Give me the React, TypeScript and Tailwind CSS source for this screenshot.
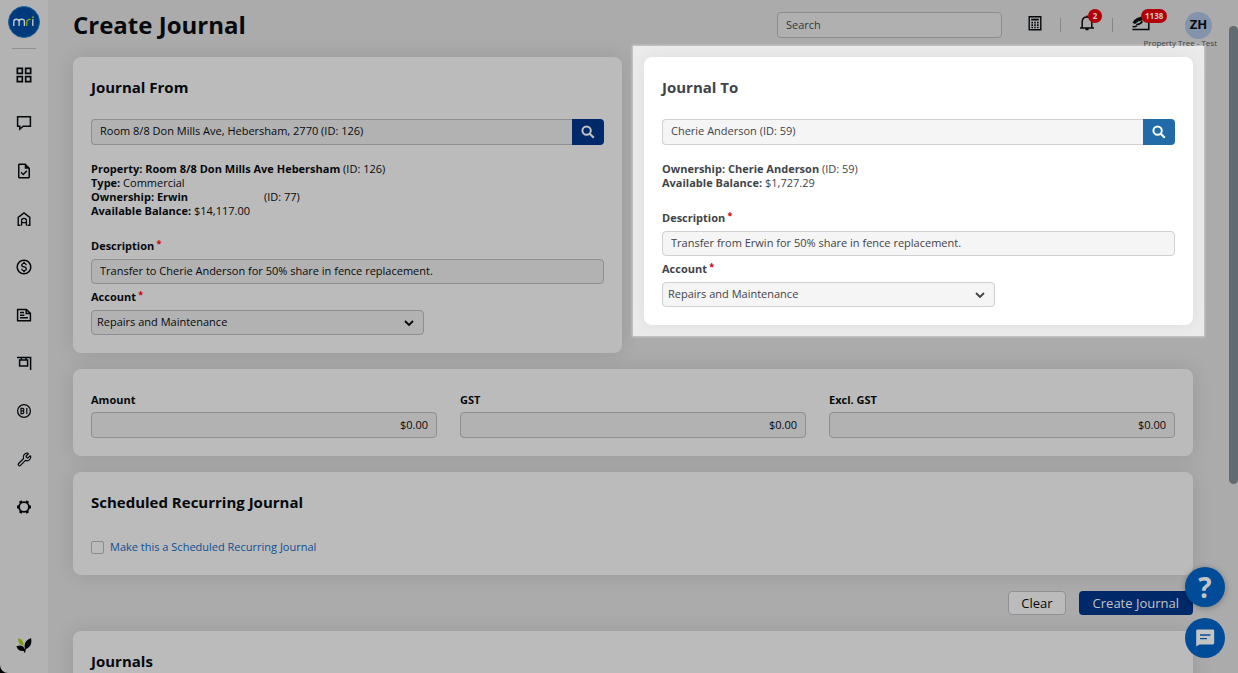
import { Wrench } from "lucide-react";
import type { ReactNode } from "react";
import {
  MdOutlineGridView,
  MdOutlineMonetizationOn,
  MdOutlineTask,
} from "react-icons/md";

const navItems: { label: string; icon: ReactNode }[] = [
  { label: "Dashboard", icon: <MdOutlineGridView size={20} /> },
  {
    label: "Messages",
    icon: (
      <svg className="size-4" viewBox="0 0 16 16" fill="none" stroke="currentColor" strokeWidth="1.5">
        <path d="M1.6 1.8h12.8v9.4H7.2L3.8 14.2v-3H1.6z" />
      </svg>
    ),
  },
  { label: "Tasks", icon: <MdOutlineTask size={18} /> },
  {
    label: "Properties",
    icon: (
      <svg className="size-4" viewBox="0 0 16 16" fill="none" stroke="currentColor" strokeWidth="1.4">
        <path d="M4.400 14.200H2.200V6.400L8 2l5.800 4.400v7.800h-2.200" />
        <path strokeWidth="1.300" d="M5.600 14.800V9.600Q5.600 7.400 8 7.400t2.400 2.200v5.200M5.800 11.600h4.400" />
      </svg>
    ),
  },
  { label: "Accounting", icon: <MdOutlineMonetizationOn size={18} /> },
  {
    label: "Invoices",
    icon: (
      <svg className="size-4" viewBox="0 0 16 16" fill="none" stroke="currentColor" strokeWidth="1.5">
        <path d="M1.6 2.4h8.8l4 4v7.4H1.6zM10.2 2.6v3.8h4M4 5.6h4M4 8.2h4.4M4 10.8h8" />
      </svg>
    ),
  },
  {
    label: "Listings",
    icon: (
      <svg className="size-4" viewBox="0 0 16 16" fill="none" stroke="currentColor" strokeWidth="1.5">
        <path d="M1 2.4h13.6V15M3.6 5h8v6h-8zM5.4 2.4V5M10 2.4V5" />
      </svg>
    ),
  },
  {
    label: "Insights",
    icon: (
      <svg className="size-4" viewBox="0 0 16 16" fill="none" stroke="currentColor">
        <circle cx="8" cy="8" r="6.4" strokeWidth="1.3" />
        <path strokeWidth="1.2" d="M5 5.4v5.2h1.8a1.4 1.4 0 0 0 0-2.7H5h1.6a1.2 1.2 0 0 0 0-2.5zM10.8 5v6" />
      </svg>
    ),
  },
  { label: "Maintenance", icon: <Wrench size={15} /> },
  {
    label: "Settings",
    icon: (
      <svg className="size-4" viewBox="0 0 16 16" fill="none" stroke="currentColor">
        <circle cx="8" cy="8" r="4.9" strokeWidth="1.800" />
        <path
          strokeWidth="3"
          d="M12.800 8H15M1 8h2.200M10.600 4l1.200-2M4.200 14l1.200-2M5.400 4L4.200 2M11.800 14l-1.200-2"
        />
      </svg>
    ),
  },
];

const amounts = [
  { id: "amount", label: "Amount" },
  { id: "gst", label: "GST" },
  { id: "excl-gst", label: "Excl. GST" },
];

type JournalProps = {
  id: string;
  title: string;
  party: string;
  description: string;
  highlighted?: boolean;
  children: ReactNode;
};

function SearchIcon() {
  return (
    <svg className="size-3.5" viewBox="0 0 14 14" fill="none" stroke="currentColor" strokeWidth="2">
      <circle cx="5.6" cy="5.6" r="4.2" />
      <path d="M8.8 8.8l4 4" />
    </svg>
  );
}

function Label({ htmlFor, children }: { htmlFor: string; children: ReactNode }) {
  return (
    <label htmlFor={htmlFor} className="block text-[11px] leading-4 font-bold">
      {children}
    </label>
  );
}

function Required() {
  return <span className="align-top text-[9px] leading-3 text-[#c8000b]"> *</span>;
}

function JournalCard({ id, title, party, description, highlighted, children }: JournalProps) {
  const field = highlighted
    ? "border-[#cfcfd6] bg-[#f5f5f5]"
    : "border-[#8e8e93] bg-[#b2b2b2]";

  return (
    <section
      className={
        highlighted
          ? "relative rounded-lg bg-white px-[18px] pt-[18px] pb-[18px] text-[#3f4449] shadow-[0_0_16px_rgba(0,0,0,0.06)]"
          : "rounded-lg bg-[#bbbbbb] px-[18px] pt-[18px] pb-[18px] shadow-[0_0_20px_rgba(0,0,0,0.1)]"
      }
    >
      <h2 className="text-[15px] leading-6 font-bold">{title}</h2>
      <div className="mt-5 flex h-[26px]">
        <input
          aria-label={title}
          defaultValue={party}
          className={`min-w-0 flex-1 rounded-l-sm border border-r-0 px-2 pb-0.5 text-[11px] ${field}`}
        />
        <button
          aria-label="Search"
          className={`flex w-8 items-center justify-center rounded-r-sm ${
            highlighted ? "bg-[#226ba9] text-white" : "bg-[#00296a] text-[#c4c4c4]"
          }`}
        >
          <SearchIcon />
        </button>
      </div>
      <div className="mt-[17px] text-[11px] leading-[14px]">{children}</div>
      <div className="mt-5">
        <Label htmlFor={`${id}-description`}>
          Description
          <Required />
        </Label>
        <input
          id={`${id}-description`}
          defaultValue={description}
          className={`mt-[5px] block h-[25px] w-full rounded-sm border px-2 pb-0.5 text-[11px] ${field}`}
        />
      </div>
      <div className="mt-[5px] w-[65%]">
        <Label htmlFor={`${id}-account`}>
          Account
          <Required />
        </Label>
        <div className="relative mt-[5px]">
          <select
            id={`${id}-account`}
            className={`block h-[25px] w-full appearance-none rounded-sm border px-[5px] text-[11px] ${field}`}
          >
            <option>Repairs and Maintenance</option>
          </select>
          <svg
            className="pointer-events-none absolute top-2 right-2.5 size-2.5"
            viewBox="0 0 10 10"
            fill="none"
            stroke="currentColor"
            strokeWidth="1.8"
          >
            <path d="M1 3l4 4 4-4" />
          </svg>
        </div>
      </div>
    </section>
  );
}

function Sidebar() {
  return (
    <aside className="flex w-12 shrink-0 flex-col items-center rounded-bl-lg bg-[#b3b3b3]">
      <svg className="mt-1.5 size-8 shrink-0" viewBox="0 0 32 32" fill="none" role="img" aria-label="MRI">
        <circle cx="16" cy="16" r="15.5" fill="#003a7c" stroke="#1c6496" />
        <g strokeWidth="1.4" strokeLinecap="round">
          <path stroke="#c0c8d0" d="M5.800 19.400v-3.600q0-2.600 2.600-2.600t2.700 2.600v3.600M11.100 15.800q0-2.600 2.700-2.600t2.600 2.600v3.600" />
          <path stroke="#7ea81c" d="M18.800 19.400v-3.200q0-2.800 3.400-2.800" />
          <path stroke="#c0c8d0" d="M24.800 13.600v5.800" />
          <path stroke="#7ea81c" strokeWidth="2" d="M25 11.200v.1" />
        </g>
      </svg>
      <div className="mt-2.5 h-px w-6 shrink-0 bg-[#8e9296]" />
      <nav className="mt-0.5">
        {navItems.map((item) => (
          <a
            key={item.label}
            href="#"
            aria-label={item.label}
            className="flex size-12 items-center justify-center"
          >
            {item.icon}
          </a>
        ))}
      </nav>
      <svg className="mt-auto mb-5 size-4 shrink-0" viewBox="0 0 16 16">
        <path fill="#7a9c14" d="M2 1.2Q7.6 2 7.6 8.8 2.200 8 2 1.2z" />
        <path
          fill="#06090c"
          d="M15 1Q17 9.600 9.200 12.400 6.400 4.600 15 1zM.4 9.200Q7 7.200 8.600 12q.6-1 1.400-1L9.200 15.600H7.800l.2-1.600Q2 14.800.4 9.200z"
        />
      </svg>
    </aside>
  );
}

function Header() {
  return (
    <header className="relative z-10 flex h-[57px] shrink-0 items-start justify-between pt-3 pr-[26px] pl-[25px]">
      <h1 className="text-2xl leading-[26px] font-bold">Create Journal</h1>
      <div className="flex h-[26px] items-center">
        <input
          aria-label="Search"
          placeholder="Search"
          className="h-[26px] w-[225px] rounded-sm border border-[#8a8c90] bg-[#b0b0b0] px-2 pb-0.5 text-[11px] placeholder:text-[#33373b]"
        />
        <button aria-label="Calculator" className="ml-[25px] pb-1">
          <svg className="size-4" viewBox="0 0 16 16" fill="none" stroke="currentColor">
            <path strokeWidth="1.4" d="M2.200 1.700h11.600v13H2.200z" />
            <path strokeWidth="1.800" d="M4.200 4.600h7.600" />
            <path strokeWidth="1.600" strokeDasharray="1.600 1.200" d="M4.400 7.600h7.400M4.400 10.100h7.400M4.400 12.500h7.400" />
          </svg>
        </button>
        <span className="ml-[17px] h-3.5 w-px bg-[#83878b]" />
        <button aria-label="Notifications" className="relative ml-[18px] pb-1">
          <svg className="size-4" viewBox="0 0 16 16" fill="none" stroke="currentColor" strokeWidth="1.5">
            <path d="M1 13h14M3.200 13V7Q3.200 2 8 2t4.800 5v6M6.400 14.600h3.200M8 .6V2" />
          </svg>
          <span className="absolute -top-1.5 left-[9px] flex h-3.5 min-w-3.5 items-center justify-center rounded-full bg-[#b10007] text-[8px] leading-none font-bold text-[#d0c4c4]">
            2
          </span>
        </button>
        <span className="ml-[17px] h-3.5 w-px bg-[#83878b]" />
        <button aria-label="Activity" className="relative ml-[19px] pb-1">
          <svg className="h-4 w-[18px]" viewBox="0 0 18 16" fill="none" stroke="currentColor">
            <path strokeWidth="1.500" d="M.4 14.400h16.400V8M.6 11.600q2.600.4 4.200-.8" />
            <path fill="currentColor" strokeWidth=".5" d="M.8 7.600Q3.600 2 12.400 1.600 11.600 4 9.600 5.400 6.400 5.200 3 8.800z" />
            <path strokeWidth="1.700" d="M4.200 9.600Q8 9.800 10.400 6.200" />
          </svg>
          <span className="absolute -top-1.5 left-[9px] flex h-3.5 items-center justify-center rounded-full bg-[#b10007] px-1 text-[8px] leading-none font-bold text-[#d0c4c4]">
            1138
          </span>
        </button>
        <div className="relative ml-[35px]">
          <div className="flex size-[27px] items-center justify-center rounded-full bg-[#8393ab] text-[13px] font-bold">
            ZH
          </div>
          <span className="absolute top-[27px] right-[-5px] text-[8px] leading-2 whitespace-nowrap text-[#3a3e42]">
            Property Tree - Test
          </span>
        </div>
      </div>
    </header>
  );
}

export default function App() {
  return (
    <div className="relative flex h-screen overflow-hidden bg-black font-['Open_Sans',sans-serif] text-[#06090c]">
      <div className="absolute inset-y-0 right-0 left-10 bg-[#ababab]" />
      <div className="relative flex min-w-0 flex-1">
        <Sidebar />
        <div className="flex min-w-0 flex-1 flex-col">
          <Header />
          <main className="flex flex-col gap-4 pr-[45px] pl-[25px]">
            <div className="grid grid-cols-2 items-start gap-[22px]">
              <JournalCard
                id="from"
                title="Journal From"
                party="Room 8/8 Don Mills Ave, Hebersham, 2770 (ID: 126)"
                description="Transfer to Cherie Anderson for 50% share in fence replacement."
              >
                <p>
                  <b>Property: Room 8/8 Don Mills Ave Hebersham</b> (ID: 126)
                </p>
                <p>
                  <b>Type:</b> Commercial
                </p>
                <p className="flex">
                  <b className="w-[173px]">Ownership: Erwin</b> (ID: 77)
                </p>
                <p>
                  <b>Available Balance:</b> $14,117.00
                </p>
              </JournalCard>

              <div className="relative">
                {/* Spotlight behind the active card */}
                <div className="absolute -inset-[11px] bg-[#ebebeb] shadow-[0_0_2px_1px_rgba(225,225,225,0.6)]" />
                <JournalCard
                  id="to"
                  title="Journal To"
                  party="Cherie Anderson (ID: 59)"
                  description="Transfer from Erwin for 50% share in fence replacement."
                  highlighted
                >
                  <p>
                    <b>Ownership: Cherie Anderson</b> (ID: 59)
                  </p>
                  <p>
                    <b>Available Balance:</b> $1,727.29
                  </p>
                </JournalCard>
              </div>
            </div>

            <section className="grid grid-cols-3 gap-[23px] rounded-lg bg-[#bbbbbb] px-[18px] pt-[23px] pb-[18px] shadow-[0_0_20px_rgba(0,0,0,0.1)]">
              {amounts.map((item) => (
                <div key={item.id}>
                  <Label htmlFor={item.id}>{item.label}</Label>
                  <input
                    id={item.id}
                    defaultValue="$0.00"
                    className="mt-1 block h-[26px] w-full rounded-sm border border-[#8e8e93] bg-[#b2b2b2] px-2 pb-0.5 text-right text-[11px]"
                  />
                </div>
              ))}
            </section>

            <section className="rounded-lg bg-[#bbbbbb] px-[18px] pt-[18px] pb-5 shadow-[0_0_20px_rgba(0,0,0,0.1)]">
              <h2 className="text-[15px] leading-6 font-bold">Scheduled Recurring Journal</h2>
              <div className="mt-[25px] flex h-4 items-center gap-1.5">
                <input
                  id="recurring"
                  type="checkbox"
                  className="size-[13px] appearance-none rounded-xs border border-[#8c8c8c]"
                />
                <label htmlFor="recurring" className="text-[11px] font-medium text-[#0c4f94]">
                  Make this a Scheduled Recurring Journal
                </label>
              </div>
            </section>

            <div className="flex justify-end gap-[13px]">
              <button className="h-6 rounded-sm border border-[#909097] bg-[#bbbbbb] px-3 text-[13px] leading-none">
                Clear
              </button>
              <button className="h-6 rounded-sm bg-[#00296a] px-3.5 text-[13px] leading-none text-[#c4c4c4]">
                Create Journal
              </button>
            </div>

            <section className="rounded-lg bg-[#bbbbbb] px-[18px] pt-[18px] pb-10 shadow-[0_0_20px_rgba(0,0,0,0.1)]">
              <h2 className="text-[15px] leading-6 font-bold">Journals</h2>
            </section>
          </main>
        </div>
      </div>

      {/* Scroll thumb */}
      <div className="absolute top-[26px] right-0 h-[68%] w-[9px] rounded-full bg-[#626a72]" />

      <div className="absolute right-[13px] bottom-[15px] z-20 flex flex-col gap-[11px]">
        <button
          aria-label="Help"
          className="flex size-10 items-center justify-center rounded-full bg-[#004c99] text-[28px] leading-none font-bold text-[#c4c4c4] shadow-[0_1px_6px_rgba(0,0,0,0.3)]"
        >
          ?
        </button>
        <button
          aria-label="Chat"
          className="flex size-10 items-center justify-center rounded-full bg-[#004c99] text-[#c4c4c4]"
        >
          <svg className="size-5" viewBox="0 0 20 20" fill="none">
            <path fill="currentColor" d="M2.600 1.600h15.200q1.400 0 1.400 1.400v12q0 1.400-1.400 1.400H4.400L1.200 18.400V3q0-1.400 1.400-1.400z" />
            <path stroke="#004c99" strokeWidth="1.400" d="M5 7h10.400M5 10.600h7" />
          </svg>
        </button>
      </div>
    </div>
  );
}
